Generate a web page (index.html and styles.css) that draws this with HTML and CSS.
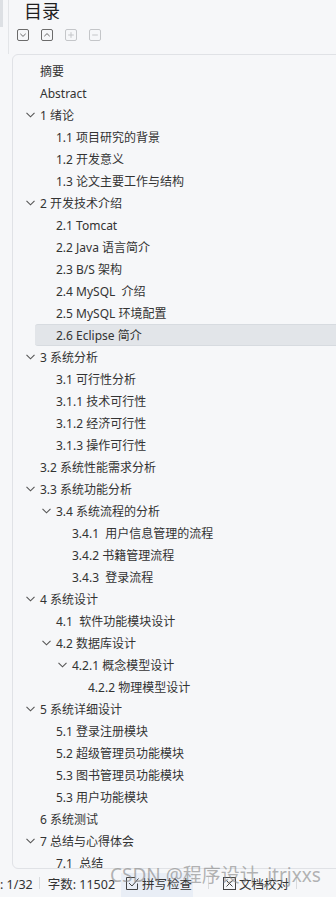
FILE: index.html
```html
<!DOCTYPE html>
<html lang="zh-CN">
<head>
<meta charset="utf-8">
<title>目录</title>
<link rel="stylesheet" href="styles.css">
</head>
<body>
<div class="app">
  <div class="top">
    <div class="rail"><div class="thumb"></div></div>
    <div class="head">
      <div class="title">目录</div>
      <div class="tools">
        <svg class="tool" viewBox="0 0 12 12"><rect x="0.5" y="0.5" width="11" height="11" rx="1.5"/><path d="M3.3 4.8 L6 7.4 L8.7 4.8"/></svg>
        <svg class="tool" viewBox="0 0 12 12"><rect x="0.5" y="0.5" width="11" height="11" rx="1.5"/><path d="M3.3 7.2 L6 4.6 L8.7 7.2"/></svg>
        <svg class="tool dim" viewBox="0 0 12 12"><rect x="0.5" y="0.5" width="11" height="11" rx="1.5"/><path d="M6 3.2 V8.8 M3.2 6 H8.8"/></svg>
        <svg class="tool dim" viewBox="0 0 12 12"><rect x="0.5" y="0.5" width="11" height="11" rx="1.5"/><path d="M3.2 6 H8.8"/></svg>
      </div>
    </div>
  </div>

  <div class="panel">
    <div class="row l0"><span class="tg"></span><span class="lb">摘要</span></div>
    <div class="row l0"><span class="tg"></span><span class="lb">Abstract</span></div>
    <div class="row l0"><span class="tg"><svg class="chev" viewBox="0 0 9 6"><path d="M0.5 0.8 L4.5 4.8 L8.5 0.8"/></svg></span><span class="lb">1 绪论</span></div>
    <div class="row l1"><span class="tg"></span><span class="lb">1.1 项目研究的背景</span></div>
    <div class="row l1"><span class="tg"></span><span class="lb">1.2 开发意义</span></div>
    <div class="row l1"><span class="tg"></span><span class="lb">1.3 论文主要工作与结构</span></div>
    <div class="row l0"><span class="tg"><svg class="chev" viewBox="0 0 9 6"><path d="M0.5 0.8 L4.5 4.8 L8.5 0.8"/></svg></span><span class="lb">2 开发技术介绍</span></div>
    <div class="row l1"><span class="tg"></span><span class="lb">2.1 Tomcat</span></div>
    <div class="row l1"><span class="tg"></span><span class="lb">2.2 Java 语言简介</span></div>
    <div class="row l1"><span class="tg"></span><span class="lb">2.3 B/S 架构</span></div>
    <div class="row l1"><span class="tg"></span><span class="lb">2.4 MySQL  介绍</span></div>
    <div class="row l1"><span class="tg"></span><span class="lb">2.5 MySQL 环境配置</span></div>
    <div class="row l1 sel"><div class="line"><span class="tg"></span><span class="lb">2.6 Eclipse 简介</span></div></div>
    <div class="row l0"><span class="tg"><svg class="chev" viewBox="0 0 9 6"><path d="M0.5 0.8 L4.5 4.8 L8.5 0.8"/></svg></span><span class="lb">3 系统分析</span></div>
    <div class="row l1"><span class="tg"></span><span class="lb">3.1 可行性分析</span></div>
    <div class="row l1"><span class="tg"></span><span class="lb">3.1.1 技术可行性</span></div>
    <div class="row l1"><span class="tg"></span><span class="lb">3.1.2 经济可行性</span></div>
    <div class="row l1"><span class="tg"></span><span class="lb">3.1.3 操作可行性</span></div>
    <div class="row l0"><span class="tg"></span><span class="lb">3.2 系统性能需求分析</span></div>
    <div class="row l0"><span class="tg"><svg class="chev" viewBox="0 0 9 6"><path d="M0.5 0.8 L4.5 4.8 L8.5 0.8"/></svg></span><span class="lb">3.3 系统功能分析</span></div>
    <div class="row l1"><span class="tg"><svg class="chev" viewBox="0 0 9 6"><path d="M0.5 0.8 L4.5 4.8 L8.5 0.8"/></svg></span><span class="lb">3.4 系统流程的分析</span></div>
    <div class="row l2"><span class="tg"></span><span class="lb">3.4.1  用户信息管理的流程</span></div>
    <div class="row l2"><span class="tg"></span><span class="lb">3.4.2 书籍管理流程</span></div>
    <div class="row l2"><span class="tg"></span><span class="lb">3.4.3  登录流程</span></div>
    <div class="row l0"><span class="tg"><svg class="chev" viewBox="0 0 9 6"><path d="M0.5 0.8 L4.5 4.8 L8.5 0.8"/></svg></span><span class="lb">4 系统设计</span></div>
    <div class="row l1"><span class="tg"></span><span class="lb">4.1  软件功能模块设计</span></div>
    <div class="row l1"><span class="tg"><svg class="chev" viewBox="0 0 9 6"><path d="M0.5 0.8 L4.5 4.8 L8.5 0.8"/></svg></span><span class="lb">4.2 数据库设计</span></div>
    <div class="row l2"><span class="tg"><svg class="chev" viewBox="0 0 9 6"><path d="M0.5 0.8 L4.5 4.8 L8.5 0.8"/></svg></span><span class="lb">4.2.1 概念模型设计</span></div>
    <div class="row l3"><span class="tg"></span><span class="lb">4.2.2 物理模型设计</span></div>
    <div class="row l0"><span class="tg"><svg class="chev" viewBox="0 0 9 6"><path d="M0.5 0.8 L4.5 4.8 L8.5 0.8"/></svg></span><span class="lb">5 系统详细设计</span></div>
    <div class="row l1"><span class="tg"></span><span class="lb">5.1 登录注册模块</span></div>
    <div class="row l1"><span class="tg"></span><span class="lb">5.2 超级管理员功能模块</span></div>
    <div class="row l1"><span class="tg"></span><span class="lb">5.3 图书管理员功能模块</span></div>
    <div class="row l1"><span class="tg"></span><span class="lb">5.3 用户功能模块</span></div>
    <div class="row l0"><span class="tg"></span><span class="lb">6 系统测试</span></div>
    <div class="row l0"><span class="tg"><svg class="chev" viewBox="0 0 9 6"><path d="M0.5 0.8 L4.5 4.8 L8.5 0.8"/></svg></span><span class="lb">7 总结与心得体会</span></div>
    <div class="row l1"><span class="tg"></span><span class="lb">7.1  总结</span></div>
  </div>

  <div class="status">
    <span class="st first">页面: 1/32</span>
    <span class="sep"></span>
    <span class="st">字数: 11502</span>
    <span class="st btn on">
      <svg class="sicon" viewBox="0 0 15 15"><path d="M12.5 7.5 V13.5 H1.5 V1.5 H10"/><path d="M4 7 L7 10 L13.5 2.5"/></svg>
      拼写检查
    </span>
    <span class="sep wide"></span>
    <span class="st btn">
      <svg class="sicon" viewBox="0 0 15 15"><rect x="1.5" y="1.5" width="12" height="12"/><path d="M4.5 4.5 L10.5 10.5 M10.5 4.5 L4.5 10.5"/></svg>
      文档校对
    </span>
    <span class="sep"></span>
  </div>

  <div class="watermark">CSDN @程序设计_itrjxxs</div>
</div>
</body>
</html>
```

FILE: styles.css
```css
* { box-sizing: border-box; }

html, body {
  margin: 0;
  padding: 0;
}

body {
  width: 336px;
  height: 897px;
  overflow: hidden;
  background: #f6f7f9;
  font-family: "Noto Sans", "Noto Sans CJK SC", sans-serif;
  color: #333;
}

.app {
  position: relative;
  display: flex;
  flex-direction: column;
  height: 897px;
}

.top {
  display: flex;
  height: 54px;
  flex: none;
}

.rail {
  width: 8px;
  flex: none;
}

.thumb {
  width: 3px;
  height: 27px;
  background: #dde0e4;
}

.head {
  flex: 1;
  border-left: 1px solid #e3e5e8;
  padding-left: 8px;
}

.title {
  height: 20px;
  line-height: 20px;
  padding-left: 7px;
  font-family: "Noto Sans CJK SC", sans-serif;
  font-size: 18px;
  color: #1f1f1f;
}

.tools {
  display: flex;
  gap: 12px;
  margin-top: 9px;
}

.tool {
  width: 12px;
  height: 12px;
  fill: none;
  stroke: #6b6b6b;
  stroke-width: 1;
}

.tool.dim {
  stroke: #c4c6c9;
}

.panel {
  flex: 1;
  margin-left: 12px;
  margin-right: -20px;
  border: 1px solid #e0e2e6;
  border-top-left-radius: 6px;
  border-bottom-left-radius: 6px;
  padding-top: 5px;
  overflow: hidden;
  min-height: 0;
}

.row {
  display: flex;
  align-items: center;
  height: 22px;
  font-size: 12px;
  white-space: pre;
}

.row.l0 { padding-left: 11px; }
.row.l1 { padding-left: 27px; }
.row.l2 { padding-left: 43px; }
.row.l3 { padding-left: 59px; }

.tg {
  width: 16px;
  flex: none;
  display: flex;
  align-items: center;
}

.chev {
  width: 9px;
  height: 6px;
  margin-left: 2px;
  fill: none;
  stroke: #555;
  stroke-width: 1.1;
}

.lb {
  color: #333;
}

.row.sel .line {
  flex: 1;
  display: flex;
  align-items: center;
  height: 22px;
  margin-left: -5px;
  padding-left: 5px;
  background: #e2e5e9;
  border-top: 1px solid #d7dbe0;
  border-bottom: 1px solid #d7dbe0;
  border-radius: 3px 0 0 3px;
}

.status {
  flex: none;
  height: 28px;
  display: flex;
  align-items: center;
  font-size: 12.5px;
  color: #333;
  white-space: nowrap;
}

.st {
  display: flex;
  align-items: center;
  height: 100%;
}

.st.first {
  margin-left: -25px;
}

.sep {
  width: 1px;
  height: 12px;
  background: #d9dbde;
  margin: 0 8px 0 6px;
}

.sep.wide {
  margin: 0 9px 0 15px;
}

.btn {
  gap: 2px;
  padding: 0 1px 0 4px;
}

.st + .btn {
  margin-left: 6px;
}

.btn.on {
  background: #e9eef6;
  height: 24px;
  margin-top: 4px;
  padding-bottom: 4px;
}

.sicon {
  width: 15px;
  height: 15px;
  fill: none;
  stroke: #444;
  stroke-width: 1;
}

.watermark {
  position: absolute;
  left: 110px;
  top: 863px;
  font-size: 19px;
  line-height: 24px;
  color: rgba(130, 130, 130, 0.6);
  white-space: nowrap;
  pointer-events: none;
}
```
